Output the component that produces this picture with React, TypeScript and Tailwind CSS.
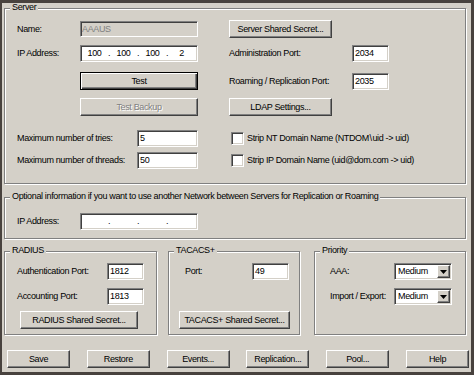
import type { ReactNode } from "react";

const sunken =
  "border border-t-[#808080] border-l-[#808080] border-b-white border-r-white shadow-[inset_1px_1px_0_#404040,inset_-1px_-1px_0_#d4d0c8]";
const raised =
  "border border-t-white border-l-white border-b-[#404040] border-r-[#404040] shadow-[inset_-1px_-1px_0_#808080] bg-[#d4d0c8]";
const disabledText = "text-[#808080] [text-shadow:1px_1px_0_#fff]";

function Group({ title, className, children }: { title: string; className: string; children: ReactNode }) {
  return (
    <div className={`relative border border-[#808080] shadow-[inset_1px_1px_0_#fff,1px_1px_0_#fff] ${className}`}>
      <span className="absolute -top-[7px] left-[5px] bg-[#d4d0c8] px-[2px] leading-[11px] whitespace-nowrap">
        {title}
      </span>
      {children}
    </div>
  );
}

function Btn({ label, className = "", disabled = false }: { label: string; className?: string; disabled?: boolean }) {
  return (
    <div
      className={`${raised} flex h-[18px] shrink-0 items-center justify-center whitespace-nowrap ${disabled ? disabledText : ""} ${className}`}
    >
      {label}
    </div>
  );
}

function Edit({ value, className = "" }: { value: string; className?: string }) {
  return (
    <div className={`${sunken} flex h-[17px] shrink-0 items-center bg-white pl-[2px] ${className}`}>{value}</div>
  );
}

// four octet fields with dots between, like the win32 ip control
function IpBox({ parts }: { parts: string[] }) {
  return (
    <div className={`${sunken} flex h-[17px] w-[118px] shrink-0 items-center bg-white`}>
      {parts.map((p, i) => (
        <div key={i} className="flex items-center">
          <span className="w-[27px] text-center">{p}</span>
          {i < 3 ? <span className="w-[2px] text-center">.</span> : null}
        </div>
      ))}
    </div>
  );
}

function Check({ children }: { children: ReactNode }) {
  return (
    <div className="ml-[33px] flex items-center whitespace-nowrap">
      <span className={`${sunken} h-[13px] w-[13px] bg-white`} />
      <span className="ml-[3px]">{children}</span>
    </div>
  );
}

function Combo({ value }: { value: string }) {
  return (
    <div className={`${sunken} flex h-[17px] w-[58px] items-stretch bg-white p-px`}>
      <span className="flex flex-1 items-center pl-[2px]">{value}</span>
      <span className={`${raised} flex w-[13px] items-center justify-center`}>
        <svg width="7" height="4" viewBox="0 0 7 4">
          <path d="M0 0h7L3.5 4z" fill="#000" />
        </svg>
      </span>
    </div>
  );
}

export default function App() {
  return (
    <div className="h-[375px] w-[474px] overflow-hidden border-t-[3px] border-r-[3px] border-b-[3px] border-l-2 border-[#48423e] bg-[#d4d0c8] font-['Liberation_Sans',Arial,sans-serif] text-[9px] leading-[11px] tracking-[-0.35px] text-black">
      <div className="pt-[5px] pl-[2px]">
        <Group title="Server" className="h-[176px] w-[462px]">
          <div className="mt-[11px] flex h-[18px] items-center pl-[12px]">
            <span className="w-[63px]">Name:</span>
            <div className={`${sunken} flex h-[16px] w-[118px] items-center pl-[1px] text-[#808080]`}>AAAUS</div>
            <Btn label="Server Shared Secret..." className="ml-[31px] w-[103px]" />
          </div>
          <div className="mt-[7px] flex h-[17px] items-center pl-[12px]">
            <span className="w-[63px]">IP Address:</span>
            <IpBox parts={["100", "100", "100", "2"]} />
            <span className="ml-[31px] w-[123px]">Administration Port:</span>
            <Edit value="2034" className="w-[37px]" />
          </div>
          <div className="mt-[10px] flex h-[18px] items-center pl-[12px]">
            <span className="w-[63px]" />
            <div className="flex h-[18px] w-[118px] items-center justify-center border border-black bg-[#d4d0c8] shadow-[inset_1px_1px_0_#fff,inset_-1px_-1px_0_#404040,inset_-2px_-2px_0_#808080]">
              Test
            </div>
            <span className="ml-[31px] w-[123px]">Roaming / Replication Port:</span>
            <Edit value="2035" className="w-[37px]" />
          </div>
          <div className="mt-[8px] flex h-[18px] items-center pl-[12px]">
            <span className="w-[63px]" />
            <Btn label="Test Backup" disabled className="w-[118px]" />
            <Btn label="LDAP Settings..." className="ml-[31px] w-[103px]" />
          </div>
          <div className="mt-[14px] flex h-[17px] items-center pl-[12px]">
            <span className="w-[120px]">Maximum number of tries:</span>
            <Edit value="5" className="w-[61px]" />
            <Check>
              Strip NT Domain Name (NTDOM<span className="px-[0.5px] tracking-normal">{"\u005C"}</span>uid -&gt; uid)
            </Check>
          </div>
          <div className="mt-[5px] flex h-[17px] items-center pl-[12px]">
            <span className="w-[120px]">Maximum number of threads:</span>
            <Edit value="50" className="w-[61px]" />
            <Check>Strip IP Domain Name (uid@dom.com -&gt; uid)</Check>
          </div>
        </Group>

        <Group
          title="Optional information if you want to use another Network between Servers for Replication or Roaming"
          className="mt-[13px] h-[42px] w-[462px]"
        >
          <div className="mt-[15px] flex h-[17px] items-center pl-[12px]">
            <span className="w-[63px]">IP Address:</span>
            <IpBox parts={["", "", "", ""]} />
          </div>
        </Group>

        <div className="mt-[12px] flex">
          <Group title="RADIUS" className="h-[84px] w-[153px]">
            <div className="mt-[11px] flex h-[17px] items-center pl-[12px]">
              <span className="w-[90px]">Authentication Port:</span>
              <Edit value="1812" className="w-[37px]" />
            </div>
            <div className="mt-[8px] flex h-[17px] items-center pl-[12px]">
              <span className="w-[90px]">Accounting Port:</span>
              <Edit value="1813" className="w-[37px]" />
            </div>
            <Btn label="RADIUS Shared Secret..." className="mt-[6px] ml-[15px] w-[118px]" />
          </Group>
          <Group title="TACACS+" className="ml-[11px] h-[84px] w-[132px]">
            <div className="mt-[11px] flex h-[17px] items-center pl-[16px]">
              <span className="w-[67px]">Port:</span>
              <Edit value="49" className="w-[37px]" />
            </div>
            <Btn label="TACACS+ Shared Secret..." className="mt-[31px] ml-[10px] w-[111px]" />
          </Group>
          <Group title="Priority" className="ml-[14px] h-[84px] w-[152px]">
            <div className="mt-[11px] flex h-[17px] items-center pl-[15px]">
              <span className="w-[64px]">AAA:</span>
              <Combo value="Medium" />
            </div>
            <div className="mt-[8px] flex h-[17px] items-center pl-[15px]">
              <span className="w-[64px]">Import / Export:</span>
              <Combo value="Medium" />
            </div>
          </Group>
        </div>

        <div className="mt-[15px] flex w-[465px] justify-between pl-[3px]">
          {["Save", "Restore", "Events...", "Replication...", "Pool...", "Help"].map((b) => (
            <Btn key={b} label={b} className="w-[63px]" />
          ))}
        </div>
      </div>
    </div>
  );
}
